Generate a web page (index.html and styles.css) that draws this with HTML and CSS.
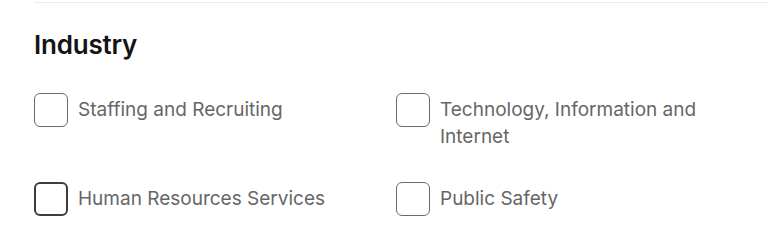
FILE: index.html
```html
<!DOCTYPE html>
<html>
<head>
<meta charset="utf-8">
<link rel="stylesheet" href="styles.css">
</head>
<body>
<section class="filter">
  <h2 class="filter-title">Industry</h2>
  <div class="options">
    <label class="option">
      <span class="box"></span>
      <span class="label-text">Staffing and Recruiting</span>
    </label>
    <label class="option">
      <span class="box"></span>
      <span class="label-text">Technology, Information and Internet</span>
    </label>
    <label class="option">
      <span class="box box-hover"></span>
      <span class="label-text">Human Resources Services</span>
    </label>
    <label class="option">
      <span class="box"></span>
      <span class="label-text">Public Safety</span>
    </label>
  </div>
</section>
</body>
</html>
```

FILE: styles.css
```css
html, body {
  margin: 0;
  padding: 0;
  background: #ffffff;
}
body {
  font-family: Inter, "Liberation Sans", Arial, sans-serif;
  width: 768px;
  height: 240px;
  overflow: hidden;
}
.filter {
  margin: 2px 0 0 34px;
  border-top: 1px solid #ebebeb;
}
.filter-title {
  margin: 27px 0 0 0;
  font-size: 26px;
  line-height: 30px;
  font-weight: 600;
  color: #141414;
  letter-spacing: -0.2px;
}
.options {
  display: grid;
  grid-template-columns: 362px 1fr;
  row-gap: 32px;
  margin-top: 33px;
}
.option {
  display: flex;
  align-items: flex-start;
}
.box {
  flex: none;
  width: 34px;
  height: 34px;
  box-sizing: border-box;
  border: 1.5px solid #6b6b6b;
  border-radius: 6px;
  margin-right: 10px;
}
.box-hover {
  border: 2.5px solid #3d3d3d;
}
.label-text {
  font-size: 19px;
  line-height: 27px;
  color: #666666;
  padding-top: 3px;
  max-width: 280px;
}
```
